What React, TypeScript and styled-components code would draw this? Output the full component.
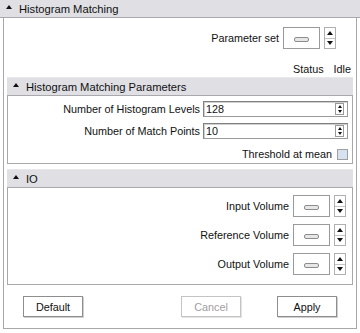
import React from "react";
import styled, { createGlobalStyle } from "styled-components";

const Global = createGlobalStyle`
  html, body { margin: 0; padding: 0; background: #ffffff; }
  body { font-family: "Liberation Sans", Arial, sans-serif; font-size: 10.8px; color: #111; }
`;

const Frame = styled.div`
  width: 360px;
  height: 333px;
  background: #fff;
  display: flex;
  flex-direction: column;
`;

const Header = styled.div<{ $inset?: boolean }>`
  height: 17px;
  background: #dfdfe4;
  border-bottom: 1px solid #a9a9ad;
  border-top: ${(p) => (p.$inset ? "1px solid #e8e8ec" : "none")};
  display: flex;
  align-items: center;
  padding-left: 6px;
  gap: 7px;
  font-size: 11.2px;
  color: #111;
`;

const Caret = styled.span`
  width: 0;
  height: 0;
  border-left: 3.5px solid transparent;
  border-right: 3.5px solid transparent;
  border-bottom: 4px solid #111;
  margin-top: -4px;
`;

const Outer = styled.div`
  flex: 1;
  margin: 0 3px 4px 3px;
  border: 1px solid #a8a8a8;
  border-top: none;
  display: flex;
  flex-direction: column;
`;

const RightRow = styled.div<{ $pad: number; $top: number }>`
  display: flex;
  justify-content: flex-end;
  align-items: center;
  gap: 4px;
  padding-right: ${(p) => p.$pad}px;
  margin-top: ${(p) => p.$top}px;
`;

const StatusText = styled.span`
  margin-left: 6px;
`;

const Panel = styled.div<{ $top: number; $height: number }>`
  margin: ${(p) => p.$top}px 3px 0 3px;
  height: ${(p) => p.$height}px;
  display: flex;
  flex-direction: column;
`;

const PanelBody = styled.div`
  flex: 1;
  border: 1px solid #a8a8a8;
  border-top: none;
  display: flex;
  flex-direction: column;
`;

const ChooserBox = styled.div`
  width: 35px;
  height: 20px;
  border: 1px solid #9a9a9a;
  background: #fff;
  display: flex;
  align-items: center;
  justify-content: center;
`;

const Pill = styled.div`
  width: 13px;
  height: 3px;
  border: 1px solid #8c8c8c;
  border-radius: 2px;
  background: #e6e6e6;
  margin-top: 2px;
`;

const Spinner = styled.div`
  width: 10px;
  height: 22px;
  display: flex;
  flex-direction: column;
  border-left: 1px solid #b0b0b0;
  border-right: 1px solid #b0b0b0;
`;

const SpinHalf = styled.div<{ $down?: boolean }>`
  flex: 1;
  display: flex;
  align-items: center;
  justify-content: center;
  border-bottom: ${(p) => (p.$down ? "1px solid #b0b0b0" : "1px solid #c4c4c4")};
  border-top: ${(p) => (p.$down ? "none" : "1px solid #b0b0b0")};
`;

const Arrow = styled.span<{ $down?: boolean }>`
  width: 0;
  height: 0;
  border-left: 3.5px solid transparent;
  border-right: 3.5px solid transparent;
  ${(p) =>
    p.$down ? "border-top: 4px solid #111;" : "border-bottom: 4px solid #111;"}
`;

const FieldRow = styled.div<{ $top: number }>`
  display: flex;
  align-items: center;
  justify-content: flex-end;
  gap: 3px;
  margin-top: ${(p) => p.$top}px;
  padding-right: 4px;
`;

const TextField = styled.div`
  width: 138px;
  height: 14px;
  border: 1px solid #9a9a9a;
  border-top-color: #808080;
  border-left-color: #808080;
  box-shadow: inset 1px 1px 0 #d0d0d0;
  display: flex;
  align-items: center;
  padding-left: 2px;
  padding-right: 3px;
  background: #fff;
`;

const FieldValue = styled.span`
  flex: 1;
`;

const MiniSpin = styled.div`
  width: 7px;
  height: 10px;
  border: 1px solid #9a9a9a;
  display: flex;
  flex-direction: column;
  align-items: center;
  justify-content: space-around;
`;

const MiniArrow = styled.span<{ $down?: boolean }>`
  width: 0;
  height: 0;
  border-left: 2.5px solid transparent;
  border-right: 2.5px solid transparent;
  ${(p) =>
    p.$down ? "border-top: 3px solid #111;" : "border-bottom: 3px solid #111;"}
`;

const CheckBox = styled.span`
  width: 9px;
  height: 9px;
  border: 1px solid #a0a0a0;
  background: #d6e2f0;
  margin-left: 2px;
`;

const ButtonRow = styled.div`
  display: flex;
  align-items: center;
  margin-top: 11px;
  padding-left: 19px;
`;

const Button = styled.button<{ $disabled?: boolean; $gap: number; $width: number }>`
  width: ${(p) => p.$width}px;
  height: 21px;
  margin-left: ${(p) => p.$gap}px;
  background: #fff;
  border: 1px solid ${(p) => (p.$disabled ? "#c4c4c4" : "#8e8e8e")};
  box-shadow: 1px 1px 0 ${(p) => (p.$disabled ? "#e4e4e4" : "#cfcfcf")};
  font-family: "Liberation Sans", Arial, sans-serif;
  font-size: 10.8px;
  color: ${(p) => (p.$disabled ? "#a0a0a0" : "#111")};
  padding: 0;
  cursor: default;
`;

const Chooser: React.FC = () => (
  <>
    <ChooserBox>
      <Pill />
    </ChooserBox>
    <Spinner>
      <SpinHalf>
        <Arrow />
      </SpinHalf>
      <SpinHalf $down>
        <Arrow $down />
      </SpinHalf>
    </Spinner>
  </>
);

const NumberField: React.FC<{ value: string }> = ({ value }) => (
  <TextField>
    <FieldValue>{value}</FieldValue>
    <MiniSpin>
      <MiniArrow />
      <MiniArrow $down />
    </MiniSpin>
  </TextField>
);

export default function App() {
  return (
    <Frame>
      <Global />
      <Header>
        <Caret />
        Histogram Matching
      </Header>
      <Outer>
        <RightRow $pad={20} $top={9}>
          Parameter set
          <Chooser />
        </RightRow>
        <RightRow $pad={5} $top={14}>
          Status
          <StatusText>Idle</StatusText>
        </RightRow>
        <Panel $top={2} $height={87}>
          <Header $inset>
            <Caret />
            Histogram Matching Parameters
          </Header>
          <PanelBody>
            <FieldRow $top={5}>
              Number of Histogram Levels
              <NumberField value="128" />
            </FieldRow>
            <FieldRow $top={6}>
              Number of Match Points
              <NumberField value="10" />
            </FieldRow>
            <FieldRow $top={9}>
              Threshold at mean
              <CheckBox />
            </FieldRow>
          </PanelBody>
        </Panel>
        <Panel $top={5} $height={116}>
          <Header $inset>
            <Caret />
            IO
          </Header>
          <PanelBody>
            <RightRow $pad={6} $top={7}>
              Input Volume
              <Chooser />
            </RightRow>
            <RightRow $pad={6} $top={7}>
              Reference Volume
              <Chooser />
            </RightRow>
            <RightRow $pad={6} $top={7}>
              Output Volume
              <Chooser />
            </RightRow>
          </PanelBody>
        </Panel>
        <ButtonRow>
          <Button $gap={0} $width={60}>Default</Button>
          <Button $gap={98} $width={60} $disabled>Cancel</Button>
          <Button $gap={36} $width={60}>Apply</Button>
        </ButtonRow>
      </Outer>
    </Frame>
  );
}
